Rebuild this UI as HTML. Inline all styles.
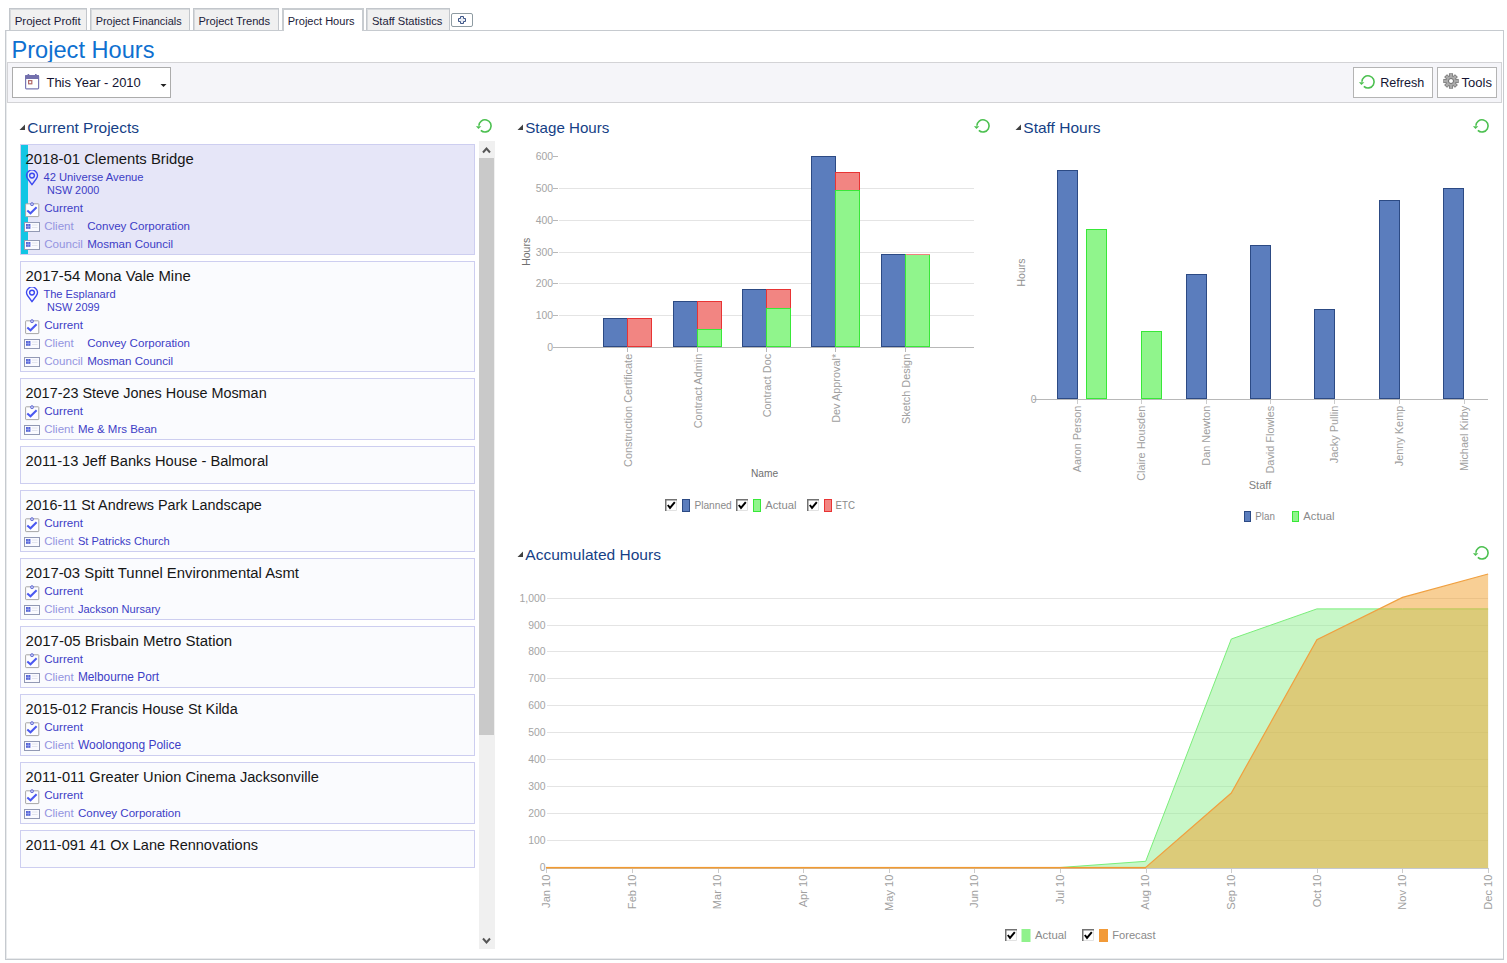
<!DOCTYPE html>
<html><head><meta charset="utf-8"><title>Project Hours</title>
<style>
html,body{margin:0;padding:0;background:#fff;width:1507px;height:963px;overflow:hidden;position:relative;font-family:"Liberation Sans", sans-serif;}
.t{position:absolute;white-space:nowrap;}
.b{position:absolute;}
</style></head><body>
<div class="b" style="left:5px;top:30px;width:1499px;height:930px;border:1px solid #c6cacf;background:#fff;box-sizing:border-box;box-shadow:inset 1px -1px 0 #e9ebed"></div>
<div class="b" style="left:9px;top:8px;width:78px;height:22px;background:#f0f0f0;border:1px solid #c2c6cb;border-bottom:none;box-sizing:border-box;box-shadow:inset 1px 1px 0 #d6d9dc"></div>
<div class="t" style="left:14.70px;top:16px;font-size:11.53px;line-height:11.53px;color:#1c1c3a;">Project Profit</div>
<div class="b" style="left:90px;top:8px;width:100px;height:22px;background:#f0f0f0;border:1px solid #c2c6cb;border-bottom:none;box-sizing:border-box;box-shadow:inset 1px 1px 0 #d6d9dc"></div>
<div class="t" style="left:95.70px;top:16px;font-size:10.9px;line-height:10.9px;color:#1c1c3a;">Project Financials</div>
<div class="b" style="left:193px;top:8px;width:86px;height:22px;background:#f0f0f0;border:1px solid #c2c6cb;border-bottom:none;box-sizing:border-box;box-shadow:inset 1px 1px 0 #d6d9dc"></div>
<div class="t" style="left:198.40px;top:16px;font-size:11.14px;line-height:11.14px;color:#1c1c3a;">Project Trends</div>
<div class="b" style="left:282px;top:8px;width:82px;height:23px;background:#fff;border:2px solid #c8ccd0;border-bottom:none;box-sizing:border-box"></div>
<div class="t" style="left:287.70px;top:16px;font-size:11.06px;line-height:11.06px;color:#1c1c3a;">Project Hours</div>
<div class="b" style="left:366px;top:8px;width:84px;height:22px;background:#f0f0f0;border:1px solid #c2c6cb;border-bottom:none;box-sizing:border-box;box-shadow:inset 1px 1px 0 #d6d9dc"></div>
<div class="t" style="left:371.90px;top:16px;font-size:11.16px;line-height:11.16px;color:#1c1c3a;">Staff Statistics</div>
<div class="b" style="left:451px;top:13px;width:22px;height:14px;border:1px solid #8e9ba2;box-sizing:border-box;background:#fff;border-radius:2px"></div>
<svg class="b" style="left:446px;top:8px" width="30" height="22"><path d="M14.5 8.5 H17.5 V10.5 H19.5 V13.5 H17.5 V15.5 H14.5 V13.5 H12.5 V10.5 H14.5 Z" fill="#e8ecf4" stroke="#3e5688" stroke-width="1"/></svg>
<div class="t" style="left:11.50px;top:39px;font-size:23.6px;line-height:23.6px;color:#0e70d0;">Project Hours</div>
<div class="b" style="left:7px;top:62px;width:1495px;height:41px;background:#f5f5f9;border:1px solid #d3d3d6;box-sizing:border-box"></div>
<div class="b" style="left:12px;top:67px;width:159px;height:31px;background:#fff;border:1px solid #acacac;box-sizing:border-box"></div>
<svg class="b" style="left:25px;top:74px" width="15" height="16" viewBox="0 0 15 16"><rect x="0.6" y="1.6" width="13" height="13.2" rx="0.8" fill="#fff" stroke="#7a78b4" stroke-width="1.2"/><rect x="0.2" y="1.2" width="13.8" height="3.8" fill="#7370ad"/><rect x="2.6" y="0" width="1.6" height="2.4" fill="#7370ad"/><rect x="10" y="0" width="1.6" height="2.4" fill="#7370ad"/><rect x="3.6" y="6.6" width="3.2" height="3.2" fill="none" stroke="#b06868" stroke-width="1.2"/></svg>
<div class="t" style="left:46.50px;top:77px;font-size:12.94px;line-height:12.94px;color:#141432;">This Year - 2010</div>
<svg class="b" style="left:160px;top:83px" width="8" height="5"><path d="M0.5 1h6l-3 3z" fill="#222"/></svg>
<div class="b" style="left:1353px;top:67px;width:80px;height:31px;background:#fff;border:1px solid #b4b4b4;box-sizing:border-box"></div>
<div class="b" style="left:1437px;top:67px;width:60px;height:31px;background:#fff;border:1px solid #b4b4b4;box-sizing:border-box"></div>
<svg class="b" style="left:1358px;top:74px" width="18" height="16" viewBox="0 0 18 16"><path d="M3.9 7.85 A6.1 6.1 0 1 1 5.84 12.31" fill="none" stroke="#4cc050" stroke-width="1.6"/><path d="M0.9 8.2 L6.3 8.2 L3.5 11 Z" fill="#4cc050"/></svg>
<div class="t" style="left:1380.30px;top:77px;font-size:12.57px;line-height:12.57px;color:#141432;">Refresh</div>
<svg class="b" style="left:1442.5px;top:73.35px" width="16" height="16" viewBox="0 0 16 16"><g transform="translate(8,8)"><g fill="#6c6c6c" stroke="#6c6c6c" stroke-width="1.3"><rect x="-1.4" y="-7.0" width="2.8" height="3.4" transform="rotate(0)"/><rect x="-1.4" y="-7.0" width="2.8" height="3.4" transform="rotate(45)"/><rect x="-1.4" y="-7.0" width="2.8" height="3.4" transform="rotate(90)"/><rect x="-1.4" y="-7.0" width="2.8" height="3.4" transform="rotate(135)"/><rect x="-1.4" y="-7.0" width="2.8" height="3.4" transform="rotate(180)"/><rect x="-1.4" y="-7.0" width="2.8" height="3.4" transform="rotate(225)"/><rect x="-1.4" y="-7.0" width="2.8" height="3.4" transform="rotate(270)"/><rect x="-1.4" y="-7.0" width="2.8" height="3.4" transform="rotate(315)"/><circle r="4.6"/></g><g fill="#aaaaaa"><rect x="-1.4" y="-7.0" width="2.8" height="3.4" transform="rotate(0)"/><rect x="-1.4" y="-7.0" width="2.8" height="3.4" transform="rotate(45)"/><rect x="-1.4" y="-7.0" width="2.8" height="3.4" transform="rotate(90)"/><rect x="-1.4" y="-7.0" width="2.8" height="3.4" transform="rotate(135)"/><rect x="-1.4" y="-7.0" width="2.8" height="3.4" transform="rotate(180)"/><rect x="-1.4" y="-7.0" width="2.8" height="3.4" transform="rotate(225)"/><rect x="-1.4" y="-7.0" width="2.8" height="3.4" transform="rotate(270)"/><rect x="-1.4" y="-7.0" width="2.8" height="3.4" transform="rotate(315)"/><circle r="4.6"/></g><circle r="2.5" fill="#fff" stroke="#6c6c6c" stroke-width="1"/></g></svg>
<div class="t" style="left:1461.50px;top:76px;font-size:13.02px;line-height:13.02px;color:#141432;">Tools</div>
<svg class="b" style="left:19px;top:124px" width="7" height="7"><path d="M6 0.5 L6 6 L0.5 6 Z" fill="#404040"/></svg>
<div class="t" style="left:27.30px;top:120px;font-size:15.46px;line-height:15.46px;color:#163f86;">Current Projects</div>
<svg class="b" style="left:517px;top:124px" width="7" height="7"><path d="M6 0.5 L6 6 L0.5 6 Z" fill="#404040"/></svg>
<div class="t" style="left:525.30px;top:120px;font-size:15.11px;line-height:15.11px;color:#163f86;">Stage Hours</div>
<svg class="b" style="left:1015px;top:124px" width="7" height="7"><path d="M6 0.5 L6 6 L0.5 6 Z" fill="#404040"/></svg>
<div class="t" style="left:1023.30px;top:120px;font-size:15.53px;line-height:15.53px;color:#163f86;">Staff Hours</div>
<svg class="b" style="left:517px;top:551px" width="7" height="7"><path d="M6 0.5 L6 6 L0.5 6 Z" fill="#404040"/></svg>
<div class="t" style="left:525.30px;top:547px;font-size:15.55px;line-height:15.55px;color:#163f86;">Accumulated Hours</div>
<svg class="b" style="left:475px;top:118px" width="18" height="16" viewBox="0 0 18 16"><path d="M3.9 7.85 A6.1 6.1 0 1 1 5.84 12.31" fill="none" stroke="#4cc050" stroke-width="1.6"/><path d="M0.9 8.2 L6.3 8.2 L3.5 11 Z" fill="#4cc050"/></svg>
<svg class="b" style="left:972.7px;top:118px" width="18" height="16" viewBox="0 0 18 16"><path d="M3.9 7.85 A6.1 6.1 0 1 1 5.84 12.31" fill="none" stroke="#4cc050" stroke-width="1.6"/><path d="M0.9 8.2 L6.3 8.2 L3.5 11 Z" fill="#4cc050"/></svg>
<svg class="b" style="left:1471.9px;top:118px" width="18" height="16" viewBox="0 0 18 16"><path d="M3.9 7.85 A6.1 6.1 0 1 1 5.84 12.31" fill="none" stroke="#4cc050" stroke-width="1.6"/><path d="M0.9 8.2 L6.3 8.2 L3.5 11 Z" fill="#4cc050"/></svg>
<svg class="b" style="left:1471.5px;top:545.2px" width="18" height="16" viewBox="0 0 18 16"><path d="M3.9 7.85 A6.1 6.1 0 1 1 5.84 12.31" fill="none" stroke="#4cc050" stroke-width="1.6"/><path d="M0.9 8.2 L6.3 8.2 L3.5 11 Z" fill="#4cc050"/></svg>
<div class="b" style="left:20px;top:144px;width:455px;height:111px;background:#e6e6f8;border:1px solid #cdcef0;box-sizing:border-box"></div>
<div class="b" style="left:21px;top:145px;width:7px;height:109px;background:#12c6e4"></div>
<div class="t" style="left:25.60px;top:152px;font-size:14.83px;line-height:14.83px;color:#161616;">2018-01 Clements Bridge</div>
<svg class="b" style="left:25px;top:170px" width="14" height="16" viewBox="0 0 14 16"><path d="M7 14.6 L2.6 8.6 A5.4 5.4 0 1 1 11.4 8.6 Z" fill="none" stroke="#3c48f0" stroke-width="1.5" stroke-linejoin="round"/><circle cx="7" cy="5.6" r="2.4" fill="none" stroke="#3c48f0" stroke-width="1.4"/></svg>
<div class="t" style="left:43.40px;top:172px;font-size:11.23px;line-height:11.23px;color:#3d3dc6;">42 Universe Avenue</div>
<div class="t" style="left:46.90px;top:185px;font-size:10.82px;line-height:10.82px;color:#3d3dc6;">NSW 2000</div>
<svg class="b" style="left:25px;top:202px" width="15" height="16" viewBox="0 -1 15 16"><rect x="0.6" y="0.8" width="13.2" height="12.8" rx="0.6" fill="#fdfdff" stroke="#a6a6a6" stroke-width="1"/><circle cx="7" cy="1.2" r="1.5" fill="#c4c8f2" stroke="#6a72d6" stroke-width="1"/><path d="M2.3 7.4 L5.5 10.3 L11.6 4.2" fill="none" stroke="#4a58f0" stroke-width="2"/></svg>
<div class="t" style="left:44.20px;top:202px;font-size:11.64px;line-height:11.64px;color:#3d3dc6;">Current</div>
<svg class="b" style="left:24px;top:222px" width="16" height="10" viewBox="0 0 16 10"><rect x="0.5" y="0.5" width="15" height="9" fill="#fafaff" stroke="#9299b4" stroke-width="1"/><rect x="2" y="2" width="4.4" height="4.8" fill="#5262d6"/><path d="M2 4.4h4.4M4.2 2v4.8" stroke="#a8b0f0" stroke-width="0.7"/><path d="M8 3h5.5M8 5.5h5.5" stroke="#e2e4ee" stroke-width="1"/></svg>
<div class="t" style="left:44.20px;top:221px;font-size:11.54px;line-height:11.54px;color:#9494e0;">Client</div>
<div class="t" style="left:87.20px;top:221px;font-size:11.57px;line-height:11.57px;color:#3d3dc6;">Convey Corporation</div>
<svg class="b" style="left:24px;top:240px" width="16" height="10" viewBox="0 0 16 10"><rect x="0.5" y="0.5" width="15" height="9" fill="#fafaff" stroke="#9299b4" stroke-width="1"/><rect x="2" y="2" width="4.4" height="4.8" fill="#5262d6"/><path d="M2 4.4h4.4M4.2 2v4.8" stroke="#a8b0f0" stroke-width="0.7"/><path d="M8 3h5.5M8 5.5h5.5" stroke="#e2e4ee" stroke-width="1"/></svg>
<div class="t" style="left:44.20px;top:238px;font-size:11.63px;line-height:11.63px;color:#9494e0;">Council</div>
<div class="t" style="left:87.20px;top:239px;font-size:11.55px;line-height:11.55px;color:#3d3dc6;">Mosman Council</div>
<div class="b" style="left:20px;top:261px;width:455px;height:111px;background:#fafbfe;border:1px solid #cdcef0;box-sizing:border-box"></div>
<div class="t" style="left:25.60px;top:269px;font-size:14.89px;line-height:14.89px;color:#161616;">2017-54 Mona Vale Mine</div>
<svg class="b" style="left:25px;top:287px" width="14" height="16" viewBox="0 0 14 16"><path d="M7 14.6 L2.6 8.6 A5.4 5.4 0 1 1 11.4 8.6 Z" fill="none" stroke="#3c48f0" stroke-width="1.5" stroke-linejoin="round"/><circle cx="7" cy="5.6" r="2.4" fill="none" stroke="#3c48f0" stroke-width="1.4"/></svg>
<div class="t" style="left:43.40px;top:289px;font-size:11.12px;line-height:11.12px;color:#3d3dc6;">The Esplanard</div>
<div class="t" style="left:46.90px;top:302px;font-size:10.92px;line-height:10.92px;color:#3d3dc6;">NSW 2099</div>
<svg class="b" style="left:25px;top:319px" width="15" height="16" viewBox="0 -1 15 16"><rect x="0.6" y="0.8" width="13.2" height="12.8" rx="0.6" fill="#fdfdff" stroke="#a6a6a6" stroke-width="1"/><circle cx="7" cy="1.2" r="1.5" fill="#c4c8f2" stroke="#6a72d6" stroke-width="1"/><path d="M2.3 7.4 L5.5 10.3 L11.6 4.2" fill="none" stroke="#4a58f0" stroke-width="2"/></svg>
<div class="t" style="left:44.20px;top:319px;font-size:11.64px;line-height:11.64px;color:#3d3dc6;">Current</div>
<svg class="b" style="left:24px;top:339px" width="16" height="10" viewBox="0 0 16 10"><rect x="0.5" y="0.5" width="15" height="9" fill="#fafaff" stroke="#9299b4" stroke-width="1"/><rect x="2" y="2" width="4.4" height="4.8" fill="#5262d6"/><path d="M2 4.4h4.4M4.2 2v4.8" stroke="#a8b0f0" stroke-width="0.7"/><path d="M8 3h5.5M8 5.5h5.5" stroke="#e2e4ee" stroke-width="1"/></svg>
<div class="t" style="left:44.20px;top:338px;font-size:11.54px;line-height:11.54px;color:#9494e0;">Client</div>
<div class="t" style="left:87.20px;top:338px;font-size:11.57px;line-height:11.57px;color:#3d3dc6;">Convey Corporation</div>
<svg class="b" style="left:24px;top:357px" width="16" height="10" viewBox="0 0 16 10"><rect x="0.5" y="0.5" width="15" height="9" fill="#fafaff" stroke="#9299b4" stroke-width="1"/><rect x="2" y="2" width="4.4" height="4.8" fill="#5262d6"/><path d="M2 4.4h4.4M4.2 2v4.8" stroke="#a8b0f0" stroke-width="0.7"/><path d="M8 3h5.5M8 5.5h5.5" stroke="#e2e4ee" stroke-width="1"/></svg>
<div class="t" style="left:44.20px;top:355px;font-size:11.63px;line-height:11.63px;color:#9494e0;">Council</div>
<div class="t" style="left:87.20px;top:356px;font-size:11.55px;line-height:11.55px;color:#3d3dc6;">Mosman Council</div>
<div class="b" style="left:20px;top:378px;width:455px;height:62px;background:#fafbfe;border:1px solid #cdcef0;box-sizing:border-box"></div>
<div class="t" style="left:25.60px;top:386px;font-size:14.42px;line-height:14.42px;color:#161616;">2017-23 Steve Jones House Mosman</div>
<svg class="b" style="left:25px;top:405px" width="15" height="16" viewBox="0 -1 15 16"><rect x="0.6" y="0.8" width="13.2" height="12.8" rx="0.6" fill="#fdfdff" stroke="#a6a6a6" stroke-width="1"/><circle cx="7" cy="1.2" r="1.5" fill="#c4c8f2" stroke="#6a72d6" stroke-width="1"/><path d="M2.3 7.4 L5.5 10.3 L11.6 4.2" fill="none" stroke="#4a58f0" stroke-width="2"/></svg>
<div class="t" style="left:44.20px;top:405px;font-size:11.64px;line-height:11.64px;color:#3d3dc6;">Current</div>
<svg class="b" style="left:24px;top:425px" width="16" height="10" viewBox="0 0 16 10"><rect x="0.5" y="0.5" width="15" height="9" fill="#fafaff" stroke="#9299b4" stroke-width="1"/><rect x="2" y="2" width="4.4" height="4.8" fill="#5262d6"/><path d="M2 4.4h4.4M4.2 2v4.8" stroke="#a8b0f0" stroke-width="0.7"/><path d="M8 3h5.5M8 5.5h5.5" stroke="#e2e4ee" stroke-width="1"/></svg>
<div class="t" style="left:44.20px;top:424px;font-size:11.54px;line-height:11.54px;color:#9494e0;">Client</div>
<div class="t" style="left:77.90px;top:424px;font-size:11.48px;line-height:11.48px;color:#3d3dc6;">Me &amp; Mrs Bean</div>
<div class="b" style="left:20px;top:446px;width:455px;height:38px;background:#fafbfe;border:1px solid #cdcef0;box-sizing:border-box"></div>
<div class="t" style="left:25.60px;top:454px;font-size:14.7px;line-height:14.7px;color:#161616;">2011-13 Jeff Banks House - Balmoral</div>
<div class="b" style="left:20px;top:490px;width:455px;height:62px;background:#fafbfe;border:1px solid #cdcef0;box-sizing:border-box"></div>
<div class="t" style="left:25.60px;top:498px;font-size:14.38px;line-height:14.38px;color:#161616;">2016-11 St Andrews Park Landscape</div>
<svg class="b" style="left:25px;top:517px" width="15" height="16" viewBox="0 -1 15 16"><rect x="0.6" y="0.8" width="13.2" height="12.8" rx="0.6" fill="#fdfdff" stroke="#a6a6a6" stroke-width="1"/><circle cx="7" cy="1.2" r="1.5" fill="#c4c8f2" stroke="#6a72d6" stroke-width="1"/><path d="M2.3 7.4 L5.5 10.3 L11.6 4.2" fill="none" stroke="#4a58f0" stroke-width="2"/></svg>
<div class="t" style="left:44.20px;top:517px;font-size:11.64px;line-height:11.64px;color:#3d3dc6;">Current</div>
<svg class="b" style="left:24px;top:537px" width="16" height="10" viewBox="0 0 16 10"><rect x="0.5" y="0.5" width="15" height="9" fill="#fafaff" stroke="#9299b4" stroke-width="1"/><rect x="2" y="2" width="4.4" height="4.8" fill="#5262d6"/><path d="M2 4.4h4.4M4.2 2v4.8" stroke="#a8b0f0" stroke-width="0.7"/><path d="M8 3h5.5M8 5.5h5.5" stroke="#e2e4ee" stroke-width="1"/></svg>
<div class="t" style="left:44.20px;top:536px;font-size:11.54px;line-height:11.54px;color:#9494e0;">Client</div>
<div class="t" style="left:77.90px;top:536px;font-size:11.1px;line-height:11.1px;color:#3d3dc6;">St Patricks Church</div>
<div class="b" style="left:20px;top:558px;width:455px;height:62px;background:#fafbfe;border:1px solid #cdcef0;box-sizing:border-box"></div>
<div class="t" style="left:25.60px;top:566px;font-size:14.87px;line-height:14.87px;color:#161616;">2017-03 Spitt Tunnel Environmental Asmt</div>
<svg class="b" style="left:25px;top:585px" width="15" height="16" viewBox="0 -1 15 16"><rect x="0.6" y="0.8" width="13.2" height="12.8" rx="0.6" fill="#fdfdff" stroke="#a6a6a6" stroke-width="1"/><circle cx="7" cy="1.2" r="1.5" fill="#c4c8f2" stroke="#6a72d6" stroke-width="1"/><path d="M2.3 7.4 L5.5 10.3 L11.6 4.2" fill="none" stroke="#4a58f0" stroke-width="2"/></svg>
<div class="t" style="left:44.20px;top:585px;font-size:11.64px;line-height:11.64px;color:#3d3dc6;">Current</div>
<svg class="b" style="left:24px;top:605px" width="16" height="10" viewBox="0 0 16 10"><rect x="0.5" y="0.5" width="15" height="9" fill="#fafaff" stroke="#9299b4" stroke-width="1"/><rect x="2" y="2" width="4.4" height="4.8" fill="#5262d6"/><path d="M2 4.4h4.4M4.2 2v4.8" stroke="#a8b0f0" stroke-width="0.7"/><path d="M8 3h5.5M8 5.5h5.5" stroke="#e2e4ee" stroke-width="1"/></svg>
<div class="t" style="left:44.20px;top:604px;font-size:11.54px;line-height:11.54px;color:#9494e0;">Client</div>
<div class="t" style="left:77.90px;top:604px;font-size:11.08px;line-height:11.08px;color:#3d3dc6;">Jackson Nursary</div>
<div class="b" style="left:20px;top:626px;width:455px;height:62px;background:#fafbfe;border:1px solid #cdcef0;box-sizing:border-box"></div>
<div class="t" style="left:25.60px;top:633px;font-size:14.99px;line-height:14.99px;color:#161616;">2017-05 Brisbain Metro Station</div>
<svg class="b" style="left:25px;top:653px" width="15" height="16" viewBox="0 -1 15 16"><rect x="0.6" y="0.8" width="13.2" height="12.8" rx="0.6" fill="#fdfdff" stroke="#a6a6a6" stroke-width="1"/><circle cx="7" cy="1.2" r="1.5" fill="#c4c8f2" stroke="#6a72d6" stroke-width="1"/><path d="M2.3 7.4 L5.5 10.3 L11.6 4.2" fill="none" stroke="#4a58f0" stroke-width="2"/></svg>
<div class="t" style="left:44.20px;top:653px;font-size:11.64px;line-height:11.64px;color:#3d3dc6;">Current</div>
<svg class="b" style="left:24px;top:673px" width="16" height="10" viewBox="0 0 16 10"><rect x="0.5" y="0.5" width="15" height="9" fill="#fafaff" stroke="#9299b4" stroke-width="1"/><rect x="2" y="2" width="4.4" height="4.8" fill="#5262d6"/><path d="M2 4.4h4.4M4.2 2v4.8" stroke="#a8b0f0" stroke-width="0.7"/><path d="M8 3h5.5M8 5.5h5.5" stroke="#e2e4ee" stroke-width="1"/></svg>
<div class="t" style="left:44.20px;top:672px;font-size:11.54px;line-height:11.54px;color:#9494e0;">Client</div>
<div class="t" style="left:77.90px;top:672px;font-size:11.86px;line-height:11.86px;color:#3d3dc6;">Melbourne Port</div>
<div class="b" style="left:20px;top:694px;width:455px;height:62px;background:#fafbfe;border:1px solid #cdcef0;box-sizing:border-box"></div>
<div class="t" style="left:25.60px;top:702px;font-size:14.46px;line-height:14.46px;color:#161616;">2015-012 Francis House St Kilda</div>
<svg class="b" style="left:25px;top:721px" width="15" height="16" viewBox="0 -1 15 16"><rect x="0.6" y="0.8" width="13.2" height="12.8" rx="0.6" fill="#fdfdff" stroke="#a6a6a6" stroke-width="1"/><circle cx="7" cy="1.2" r="1.5" fill="#c4c8f2" stroke="#6a72d6" stroke-width="1"/><path d="M2.3 7.4 L5.5 10.3 L11.6 4.2" fill="none" stroke="#4a58f0" stroke-width="2"/></svg>
<div class="t" style="left:44.20px;top:721px;font-size:11.64px;line-height:11.64px;color:#3d3dc6;">Current</div>
<svg class="b" style="left:24px;top:741px" width="16" height="10" viewBox="0 0 16 10"><rect x="0.5" y="0.5" width="15" height="9" fill="#fafaff" stroke="#9299b4" stroke-width="1"/><rect x="2" y="2" width="4.4" height="4.8" fill="#5262d6"/><path d="M2 4.4h4.4M4.2 2v4.8" stroke="#a8b0f0" stroke-width="0.7"/><path d="M8 3h5.5M8 5.5h5.5" stroke="#e2e4ee" stroke-width="1"/></svg>
<div class="t" style="left:44.20px;top:740px;font-size:11.54px;line-height:11.54px;color:#9494e0;">Client</div>
<div class="t" style="left:77.90px;top:739px;font-size:12.0px;line-height:12.0px;color:#3d3dc6;">Woolongong Police</div>
<div class="b" style="left:20px;top:762px;width:455px;height:62px;background:#fafbfe;border:1px solid #cdcef0;box-sizing:border-box"></div>
<div class="t" style="left:25.60px;top:770px;font-size:14.65px;line-height:14.65px;color:#161616;">2011-011 Greater Union Cinema Jacksonville</div>
<svg class="b" style="left:25px;top:789px" width="15" height="16" viewBox="0 -1 15 16"><rect x="0.6" y="0.8" width="13.2" height="12.8" rx="0.6" fill="#fdfdff" stroke="#a6a6a6" stroke-width="1"/><circle cx="7" cy="1.2" r="1.5" fill="#c4c8f2" stroke="#6a72d6" stroke-width="1"/><path d="M2.3 7.4 L5.5 10.3 L11.6 4.2" fill="none" stroke="#4a58f0" stroke-width="2"/></svg>
<div class="t" style="left:44.20px;top:789px;font-size:11.64px;line-height:11.64px;color:#3d3dc6;">Current</div>
<svg class="b" style="left:24px;top:809px" width="16" height="10" viewBox="0 0 16 10"><rect x="0.5" y="0.5" width="15" height="9" fill="#fafaff" stroke="#9299b4" stroke-width="1"/><rect x="2" y="2" width="4.4" height="4.8" fill="#5262d6"/><path d="M2 4.4h4.4M4.2 2v4.8" stroke="#a8b0f0" stroke-width="0.7"/><path d="M8 3h5.5M8 5.5h5.5" stroke="#e2e4ee" stroke-width="1"/></svg>
<div class="t" style="left:44.20px;top:808px;font-size:11.54px;line-height:11.54px;color:#9494e0;">Client</div>
<div class="t" style="left:77.90px;top:808px;font-size:11.57px;line-height:11.57px;color:#3d3dc6;">Convey Corporation</div>
<div class="b" style="left:20px;top:830px;width:455px;height:38px;background:#fafbfe;border:1px solid #cdcef0;box-sizing:border-box"></div>
<div class="t" style="left:25.60px;top:838px;font-size:14.54px;line-height:14.54px;color:#161616;">2011-091 41 Ox Lane Rennovations</div>
<div class="b" style="left:479px;top:141px;width:16px;height:808px;background:#f0f0f0"></div>
<div class="b" style="left:479px;top:158px;width:15px;height:577px;background:#c9c9c9"></div>
<svg class="b" style="left:482px;top:146px" width="9" height="8"><path d="M1 6.5 L4.5 2.5 L8 6.5" fill="none" stroke="#555" stroke-width="2"/></svg>
<svg class="b" style="left:482px;top:937px" width="9" height="8"><path d="M1 1.5 L4.5 5.5 L8 1.5" fill="none" stroke="#555" stroke-width="2"/></svg>
<svg class="b" style="left:0;top:0" width="1507" height="963" font-family="Liberation Sans, sans-serif"><rect x="553" y="347" width="5" height="1" fill="#b8b8b8"/><text x="553" y="351" font-size="10.4" fill="#a4a4a4" text-anchor="end" >0</text><rect x="559" y="315" width="415" height="1" fill="#e4e4e4"/><rect x="553" y="315" width="5" height="1" fill="#b8b8b8"/><text x="553" y="319" font-size="10.4" fill="#a4a4a4" text-anchor="end" >100</text><rect x="559" y="283" width="415" height="1" fill="#e4e4e4"/><rect x="553" y="283" width="5" height="1" fill="#b8b8b8"/><text x="553" y="287" font-size="10.4" fill="#a4a4a4" text-anchor="end" >200</text><rect x="559" y="252" width="415" height="1" fill="#e4e4e4"/><rect x="553" y="252" width="5" height="1" fill="#b8b8b8"/><text x="553" y="256" font-size="10.4" fill="#a4a4a4" text-anchor="end" >300</text><rect x="559" y="220" width="415" height="1" fill="#e4e4e4"/><rect x="553" y="220" width="5" height="1" fill="#b8b8b8"/><text x="553" y="224" font-size="10.4" fill="#a4a4a4" text-anchor="end" >400</text><rect x="559" y="188" width="415" height="1" fill="#e4e4e4"/><rect x="553" y="188" width="5" height="1" fill="#b8b8b8"/><text x="553" y="192" font-size="10.4" fill="#a4a4a4" text-anchor="end" >500</text><rect x="553" y="156" width="5" height="1" fill="#b8b8b8"/><text x="553" y="160" font-size="10.4" fill="#a4a4a4" text-anchor="end" >600</text><rect x="553" y="347" width="421" height="1" fill="#b8b8b8"/><rect x="603.5" y="318.5" width="24" height="28" fill="#5b7dbd" stroke="#2c4a84" stroke-width="1"/><rect x="627.5" y="318.5" width="24" height="28" fill="#f28582" stroke="#e83434" stroke-width="1"/><rect x="627" y="347" width="1" height="5" fill="#b8b8b8"/><text x="0" y="0" font-size="10.9" fill="#a0a0a0" text-anchor="end" transform="translate(631.6,353.8) rotate(-90)">Construction Certificate</text><rect x="673.5" y="301.5" width="24" height="45" fill="#5b7dbd" stroke="#2c4a84" stroke-width="1"/><rect x="697.5" y="301.5" width="24" height="28" fill="#f28582" stroke="#e83434" stroke-width="1"/><rect x="697.5" y="329.5" width="24" height="17" fill="#90f58c" stroke="#38e838" stroke-width="1"/><rect x="697" y="347" width="1" height="5" fill="#b8b8b8"/><text x="0" y="0" font-size="10.9" fill="#a0a0a0" text-anchor="end" transform="translate(701.6,353.8) rotate(-90)">Contract Admin</text><rect x="742.5" y="289.5" width="24" height="57" fill="#5b7dbd" stroke="#2c4a84" stroke-width="1"/><rect x="766.5" y="289.5" width="24" height="19" fill="#f28582" stroke="#e83434" stroke-width="1"/><rect x="766.5" y="308.5" width="24" height="38" fill="#90f58c" stroke="#38e838" stroke-width="1"/><rect x="766" y="347" width="1" height="5" fill="#b8b8b8"/><text x="0" y="0" font-size="10.9" fill="#a0a0a0" text-anchor="end" transform="translate(770.6,353.8) rotate(-90)">Contract Doc</text><rect x="811.5" y="156.5" width="24" height="190" fill="#5b7dbd" stroke="#2c4a84" stroke-width="1"/><rect x="835.5" y="172.5" width="24" height="18" fill="#f28582" stroke="#e83434" stroke-width="1"/><rect x="835.5" y="190.5" width="24" height="156" fill="#90f58c" stroke="#38e838" stroke-width="1"/><rect x="835" y="347" width="1" height="5" fill="#b8b8b8"/><text x="0" y="0" font-size="10.9" fill="#a0a0a0" text-anchor="end" transform="translate(839.6,353.8) rotate(-90)">Dev Approval*</text><rect x="881.5" y="254.5" width="24" height="92" fill="#5b7dbd" stroke="#2c4a84" stroke-width="1"/><rect x="905.5" y="254.5" width="24" height="92" fill="#90f58c" stroke="#38e838" stroke-width="1"/><rect x="906" y="254" width="24" height="1" fill="#f08080"/><rect x="905" y="347" width="1" height="5" fill="#b8b8b8"/><text x="0" y="0" font-size="10.9" fill="#a0a0a0" text-anchor="end" transform="translate(909.6,353.8) rotate(-90)">Sketch Design</text><text x="0" y="0" font-size="10.5" fill="#707070" text-anchor="middle" transform="translate(529.6,251.8) rotate(-90)">Hours</text><text x="764.5" y="477" font-size="10.2" fill="#707070" text-anchor="middle" >Name</text><rect x="665" y="499" width="12" height="12" fill="#fff"/><path d="M665.5 510.5 H676.5 V499.5" fill="none" stroke="#e2e2e2" stroke-width="1"/><path d="M665.75 511 V499.75 H677" fill="none" stroke="#727272" stroke-width="1.5"/><path d="M667.8 505 L670 507.8 L674.8 502.2" fill="none" stroke="#000" stroke-width="2"/><rect x="682.5" y="499.5" width="7" height="12" fill="#5b7dbd" stroke="#2c4a84" stroke-width="1"/><text x="694.4" y="508.8" font-size="10.5" fill="#8a8a8a" text-anchor="start"  textLength="37.4" lengthAdjust="spacingAndGlyphs">Planned</text><rect x="736" y="499" width="12" height="12" fill="#fff"/><path d="M736.5 510.5 H747.5 V499.5" fill="none" stroke="#e2e2e2" stroke-width="1"/><path d="M736.75 511 V499.75 H748" fill="none" stroke="#727272" stroke-width="1.5"/><path d="M738.8 505 L741 507.8 L745.8 502.2" fill="none" stroke="#000" stroke-width="2"/><rect x="753.5" y="499.5" width="7" height="12" fill="#90f58c" stroke="#38e838" stroke-width="1"/><text x="765.2" y="508.8" font-size="10.5" fill="#8a8a8a" text-anchor="start"  textLength="31.3" lengthAdjust="spacingAndGlyphs">Actual</text><rect x="807" y="499" width="12" height="12" fill="#fff"/><path d="M807.5 510.5 H818.5 V499.5" fill="none" stroke="#e2e2e2" stroke-width="1"/><path d="M807.75 511 V499.75 H819" fill="none" stroke="#727272" stroke-width="1.5"/><path d="M809.8 505 L812 507.8 L816.8 502.2" fill="none" stroke="#000" stroke-width="2"/><rect x="824.5" y="499.5" width="7" height="12" fill="#f28582" stroke="#e83434" stroke-width="1"/><text x="835.6" y="508.8" font-size="10.5" fill="#8a8a8a" text-anchor="start"  textLength="19.4" lengthAdjust="spacingAndGlyphs">ETC</text><rect x="1037" y="399" width="451" height="1" fill="#b8b8b8"/><rect x="1033" y="399" width="4" height="1" fill="#b8b8b8"/><text x="1036.5" y="403" font-size="10.4" fill="#a4a4a4" text-anchor="end" >0</text><rect x="1057.5" y="170.5" width="20" height="228" fill="#5b7dbd" stroke="#2c4a84" stroke-width="1"/><rect x="1186.5" y="274.5" width="20" height="124" fill="#5b7dbd" stroke="#2c4a84" stroke-width="1"/><rect x="1250.5" y="245.5" width="20" height="153" fill="#5b7dbd" stroke="#2c4a84" stroke-width="1"/><rect x="1314.5" y="309.5" width="20" height="89" fill="#5b7dbd" stroke="#2c4a84" stroke-width="1"/><rect x="1379.5" y="200.5" width="20" height="198" fill="#5b7dbd" stroke="#2c4a84" stroke-width="1"/><rect x="1443.5" y="188.5" width="20" height="210" fill="#5b7dbd" stroke="#2c4a84" stroke-width="1"/><rect x="1086.5" y="229.5" width="20" height="169" fill="#90f58c" stroke="#38e838" stroke-width="1"/><rect x="1141.5" y="331.5" width="20" height="67" fill="#90f58c" stroke="#38e838" stroke-width="1"/><rect x="1077" y="400" width="1" height="4" fill="#cccccc"/><text x="0" y="0" font-size="10.9" fill="#a0a0a0" text-anchor="end" transform="translate(1080.8,405.7) rotate(-90)">Aaron Person</text><rect x="1141" y="400" width="1" height="4" fill="#cccccc"/><text x="0" y="0" font-size="10.9" fill="#a0a0a0" text-anchor="end" transform="translate(1144.8,405.7) rotate(-90)">Claire Housden</text><rect x="1206" y="400" width="1" height="4" fill="#cccccc"/><text x="0" y="0" font-size="10.9" fill="#a0a0a0" text-anchor="end" transform="translate(1209.8,405.7) rotate(-90)">Dan Newton</text><rect x="1270" y="400" width="1" height="4" fill="#cccccc"/><text x="0" y="0" font-size="10.9" fill="#a0a0a0" text-anchor="end" transform="translate(1273.8,405.7) rotate(-90)">David Flowles</text><rect x="1334" y="400" width="1" height="4" fill="#cccccc"/><text x="0" y="0" font-size="10.9" fill="#a0a0a0" text-anchor="end" transform="translate(1337.8,405.7) rotate(-90)">Jacky Pullin</text><rect x="1399" y="400" width="1" height="4" fill="#cccccc"/><text x="0" y="0" font-size="10.9" fill="#a0a0a0" text-anchor="end" transform="translate(1402.8,405.7) rotate(-90)">Jenny Kemp</text><rect x="1464" y="400" width="1" height="4" fill="#cccccc"/><text x="0" y="0" font-size="10.9" fill="#a0a0a0" text-anchor="end" transform="translate(1467.8,405.7) rotate(-90)">Michael Kirby</text><text x="0" y="0" font-size="10.5" fill="#909090" text-anchor="middle" transform="translate(1025,272.5) rotate(-90)">Hours</text><text x="1260" y="489.4" font-size="11" fill="#808080" text-anchor="middle" >Staff</text><rect x="1244.5" y="511.5" width="6" height="10" fill="#5b7dbd" stroke="#2c4a84" stroke-width="1"/><text x="1255.3" y="520" font-size="10.5" fill="#8a8a8a" text-anchor="start"  textLength="19.6" lengthAdjust="spacingAndGlyphs">Plan</text><rect x="1292.5" y="511.5" width="6" height="10" fill="#90f58c" stroke="#38e838" stroke-width="1"/><text x="1303.3" y="520" font-size="10.5" fill="#8a8a8a" text-anchor="start"  textLength="31.2" lengthAdjust="spacingAndGlyphs">Actual</text><rect x="547" y="840" width="941" height="1" fill="#e4e4e4"/><text x="545.5" y="844" font-size="10.4" fill="#a4a4a4" text-anchor="end" >100</text><rect x="547" y="813" width="941" height="1" fill="#e4e4e4"/><text x="545.5" y="817" font-size="10.4" fill="#a4a4a4" text-anchor="end" >200</text><rect x="547" y="786" width="941" height="1" fill="#e4e4e4"/><text x="545.5" y="790" font-size="10.4" fill="#a4a4a4" text-anchor="end" >300</text><rect x="547" y="759" width="941" height="1" fill="#e4e4e4"/><text x="545.5" y="763" font-size="10.4" fill="#a4a4a4" text-anchor="end" >400</text><rect x="547" y="732" width="941" height="1" fill="#e4e4e4"/><text x="545.5" y="736" font-size="10.4" fill="#a4a4a4" text-anchor="end" >500</text><rect x="547" y="705" width="941" height="1" fill="#e4e4e4"/><text x="545.5" y="709" font-size="10.4" fill="#a4a4a4" text-anchor="end" >600</text><rect x="547" y="678" width="941" height="1" fill="#e4e4e4"/><text x="545.5" y="682" font-size="10.4" fill="#a4a4a4" text-anchor="end" >700</text><rect x="547" y="651" width="941" height="1" fill="#e4e4e4"/><text x="545.5" y="655" font-size="10.4" fill="#a4a4a4" text-anchor="end" >800</text><rect x="547" y="625" width="941" height="1" fill="#e4e4e4"/><text x="545.5" y="629" font-size="10.4" fill="#a4a4a4" text-anchor="end" >900</text><rect x="547" y="598" width="941" height="1" fill="#e4e4e4"/><text x="545.5" y="602" font-size="10.4" fill="#a4a4a4" text-anchor="end" >1,000</text><text x="545.5" y="871" font-size="10.4" fill="#a4a4a4" text-anchor="end" >0</text><polygon points="546.5,868 546.5,867.5 632.1,867.5 717.7,867.5 803.3,867.5 888.9,867.5 974.5,867.5 1060.1,867.5 1145.7,861.3 1231.3,639.0 1316.9,608.9 1402.5,608.9 1488.1,608.9 1488.1,868" fill="rgba(144,240,144,0.5)" stroke="none"/><polyline points="546.5,867.5 632.1,867.5 717.7,867.5 803.3,867.5 888.9,867.5 974.5,867.5 1060.1,867.5 1145.7,861.3 1231.3,639.0 1316.9,608.9 1402.5,608.9 1488.1,608.9" fill="none" stroke="#7aee7a" stroke-width="1"/><polygon points="546.5,868 546.5,867.5 632.1,867.5 717.7,867.5 803.3,867.5 888.9,867.5 974.5,867.5 1060.1,867.5 1145.7,867.5 1231.3,793.0 1316.9,639.8 1402.5,597.4 1488.1,574.0 1488.1,868" fill="rgba(242,160,44,0.5)" stroke="none"/><polyline points="546.5,867.5 632.1,867.5 717.7,867.5 803.3,867.5 888.9,867.5 974.5,867.5 1060.1,867.5 1145.7,867.5 1231.3,793.0 1316.9,639.8 1402.5,597.4 1488.1,574.0" fill="none" stroke="#f0a040" stroke-width="1.2"/><rect x="546" y="868" width="943" height="1" fill="#c4c8d0"/><rect x="546" y="866.9" width="600" height="1.6" fill="#f29a30"/><rect x="546" y="869" width="1" height="4" fill="#cccccc"/><text x="0" y="0" font-size="11.1" fill="#a0a0a0" text-anchor="end" transform="translate(550.1,874.6) rotate(-90)">Jan 10</text><rect x="632" y="869" width="1" height="4" fill="#cccccc"/><text x="0" y="0" font-size="11.1" fill="#a0a0a0" text-anchor="end" transform="translate(635.7,874.6) rotate(-90)">Feb 10</text><rect x="718" y="869" width="1" height="4" fill="#cccccc"/><text x="0" y="0" font-size="11.1" fill="#a0a0a0" text-anchor="end" transform="translate(721.3,874.6) rotate(-90)">Mar 10</text><rect x="803" y="869" width="1" height="4" fill="#cccccc"/><text x="0" y="0" font-size="11.1" fill="#a0a0a0" text-anchor="end" transform="translate(806.9,874.6) rotate(-90)">Apr 10</text><rect x="889" y="869" width="1" height="4" fill="#cccccc"/><text x="0" y="0" font-size="11.1" fill="#a0a0a0" text-anchor="end" transform="translate(892.5,874.6) rotate(-90)">May 10</text><rect x="974" y="869" width="1" height="4" fill="#cccccc"/><text x="0" y="0" font-size="11.1" fill="#a0a0a0" text-anchor="end" transform="translate(978.1,874.6) rotate(-90)">Jun 10</text><rect x="1060" y="869" width="1" height="4" fill="#cccccc"/><text x="0" y="0" font-size="11.1" fill="#a0a0a0" text-anchor="end" transform="translate(1063.7,874.6) rotate(-90)">Jul 10</text><rect x="1146" y="869" width="1" height="4" fill="#cccccc"/><text x="0" y="0" font-size="11.1" fill="#a0a0a0" text-anchor="end" transform="translate(1149.3,874.6) rotate(-90)">Aug 10</text><rect x="1231" y="869" width="1" height="4" fill="#cccccc"/><text x="0" y="0" font-size="11.1" fill="#a0a0a0" text-anchor="end" transform="translate(1234.9,874.6) rotate(-90)">Sep 10</text><rect x="1317" y="869" width="1" height="4" fill="#cccccc"/><text x="0" y="0" font-size="11.1" fill="#a0a0a0" text-anchor="end" transform="translate(1320.5,874.6) rotate(-90)">Oct 10</text><rect x="1402" y="869" width="1" height="4" fill="#cccccc"/><text x="0" y="0" font-size="11.1" fill="#a0a0a0" text-anchor="end" transform="translate(1406.1,874.6) rotate(-90)">Nov 10</text><rect x="1488" y="869" width="1" height="4" fill="#cccccc"/><text x="0" y="0" font-size="11.1" fill="#a0a0a0" text-anchor="end" transform="translate(1491.7,874.6) rotate(-90)">Dec 10</text><rect x="1005" y="929" width="12" height="12" fill="#fff"/><path d="M1005.5 940.5 H1016.5 V929.5" fill="none" stroke="#e2e2e2" stroke-width="1"/><path d="M1005.75 941 V929.75 H1017" fill="none" stroke="#727272" stroke-width="1.5"/><path d="M1007.8 935 L1010 937.8 L1014.8 932.2" fill="none" stroke="#000" stroke-width="2"/><rect x="1022.0" y="929.5" width="8" height="12" fill="#90f28c" stroke="#90f28c" stroke-width="1"/><text x="1035" y="938.6" font-size="10.6" fill="#8a8a8a" text-anchor="start"  textLength="31.6" lengthAdjust="spacingAndGlyphs">Actual</text><rect x="1082" y="929" width="12" height="12" fill="#fff"/><path d="M1082.5 940.5 H1093.5 V929.5" fill="none" stroke="#e2e2e2" stroke-width="1"/><path d="M1082.75 941 V929.75 H1094" fill="none" stroke="#727272" stroke-width="1.5"/><path d="M1084.8 935 L1087 937.8 L1091.8 932.2" fill="none" stroke="#000" stroke-width="2"/><rect x="1099.5" y="929.5" width="8" height="12" fill="#f29a38" stroke="#f29a38" stroke-width="1"/><text x="1112.2" y="938.6" font-size="10.6" fill="#8a8a8a" text-anchor="start"  textLength="43.3" lengthAdjust="spacingAndGlyphs">Forecast</text></svg>
</body></html>
